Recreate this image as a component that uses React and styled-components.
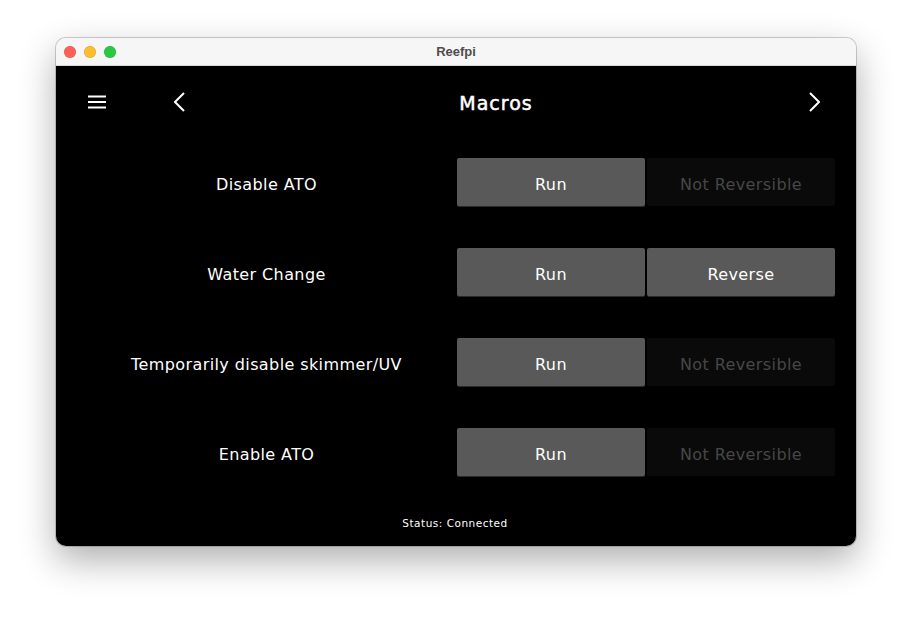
import React from 'react';
import styled, { createGlobalStyle } from 'styled-components';

const GlobalStyle = createGlobalStyle`
  html, body {
    margin: 0;
    padding: 0;
    background: #ffffff;
  }
  body {
    font-family: "DejaVu Sans", "Liberation Sans", sans-serif;
  }
`;

const Desktop = styled.div`
  width: 912px;
  height: 620px;
  padding: 38px 56px 0;
  box-sizing: border-box;
`;

const Window = styled.div`
  width: 800px;
  border-radius: 10px;
  overflow: hidden;
  box-shadow: 0 0 0 1px rgba(0, 0, 0, 0.18), 0 14px 36px rgba(0, 0, 0, 0.32);
`;

const TitleBar = styled.div`
  height: 28px;
  background: #f6f6f6;
  border-bottom: 1px solid #d8d8d8;
  box-sizing: border-box;
  display: flex;
  align-items: center;
  position: relative;
  padding-left: 8px;
`;

const Light = styled.span`
  width: 12px;
  height: 12px;
  border-radius: 50%;
  margin-right: 8px;
  background: ${p => p.color};
  box-shadow: inset 0 0 0 0.5px rgba(0, 0, 0, 0.15);
`;

const WindowTitle = styled.div`
  position: absolute;
  left: 0;
  right: 0;
  text-align: center;
  font-family: "Liberation Sans", sans-serif;
  font-weight: bold;
  font-size: 13px;
  color: #4d4d4d;
  pointer-events: none;
`;

const Screen = styled.div`
  height: 480px;
  background: #000;
  color: #fff;
  display: flex;
  flex-direction: column;
`;

const Header = styled.div`
  height: 72px;
  display: flex;
  align-items: center;
  padding: 0 30px 0 30px;
`;

const IconButton = styled.div`
  width: ${p => p.w || 24}px;
  margin-left: ${p => p.gap || 0}px;
  display: flex;
  align-items: center;
  justify-content: center;
`;

const Title = styled.div`
  flex: 1;
  text-align: center;
  font-size: 19px;
  letter-spacing: 1px;
  -webkit-text-stroke: 0.5px #fff;
  margin-left: 78px;
  padding-top: 2px;
`;

const Rows = styled.div`
  display: flex;
  flex-direction: column;
  gap: 42px;
  padding: 20px 21px 0 20px;
`;

const Row = styled.div`
  display: flex;
  align-items: center;
  height: 48px;
`;

const Label = styled.div`
  width: 381px;
  text-align: center;
  font-size: 16px;
  letter-spacing: 0.4px;
  padding-top: 5px;
`;

const Buttons = styled.div`
  display: flex;
  gap: 2px;
`;

const Button = styled.div`
  width: 188px;
  height: 48px;
  border-radius: 2px;
  display: flex;
  align-items: center;
  justify-content: center;
  box-sizing: border-box;
  padding-top: 5px;
  font-size: 16px;
  letter-spacing: 0.4px;
  background: ${p => (p.disabled ? '#0a0a0a' : '#595959')};
  color: ${p => (p.disabled ? '#474747' : '#ffffff')};
  box-shadow: ${p => (p.disabled ? 'none' : '0 1px 0 #2a2a2a')};
`;

const Status = styled.div`
  margin-top: auto;
  padding-bottom: 17px;
  text-align: center;
  font-size: 10.5px;
  letter-spacing: 0.5px;
  margin-right: 2px;
`;

const macros = [
  { name: 'Disable ATO', reversible: false },
  { name: 'Water Change', reversible: true },
  { name: 'Temporarily disable skimmer/UV', reversible: false },
  { name: 'Enable ATO', reversible: false },
];

const Hamburger = () => (
  <svg width="18" height="14" viewBox="0 0 18 14">
    <path d="M0 1.5h18M0 7h18M0 12.5h18" stroke="#fff" strokeWidth="2" />
  </svg>
);

const Chevron = ({ right }) => (
  <svg width="12" height="20" viewBox="0 0 12 20">
    <path
      d={right ? 'M2 1l9 9-9 9' : 'M10 1l-9 9 9 9'}
      stroke="#fff"
      strokeWidth="2"
      fill="none"
    />
  </svg>
);

export default function App() {
  return (
    <Desktop>
      <GlobalStyle />
      <Window>
        <TitleBar>
          <Light color="#fe5f57" />
          <Light color="#febc2e" />
          <Light color="#28c840" />
          <WindowTitle>Reefpi</WindowTitle>
        </TitleBar>
        <Screen>
          <Header>
            <IconButton w={22}>
              <Hamburger />
            </IconButton>
            <IconButton w={24} gap={60}>
              <Chevron />
            </IconButton>
            <Title>Macros</Title>
            <IconButton w={24} gap={80}>
              <Chevron right />
            </IconButton>
          </Header>
          <Rows>
            {macros.map(m => (
              <Row key={m.name}>
                <Label>{m.name}</Label>
                <Buttons>
                  <Button>Run</Button>
                  {m.reversible ? (
                    <Button>Reverse</Button>
                  ) : (
                    <Button disabled>Not Reversible</Button>
                  )}
                </Buttons>
              </Row>
            ))}
          </Rows>
          <Status>Status: Connected</Status>
        </Screen>
      </Window>
    </Desktop>
  );
}
